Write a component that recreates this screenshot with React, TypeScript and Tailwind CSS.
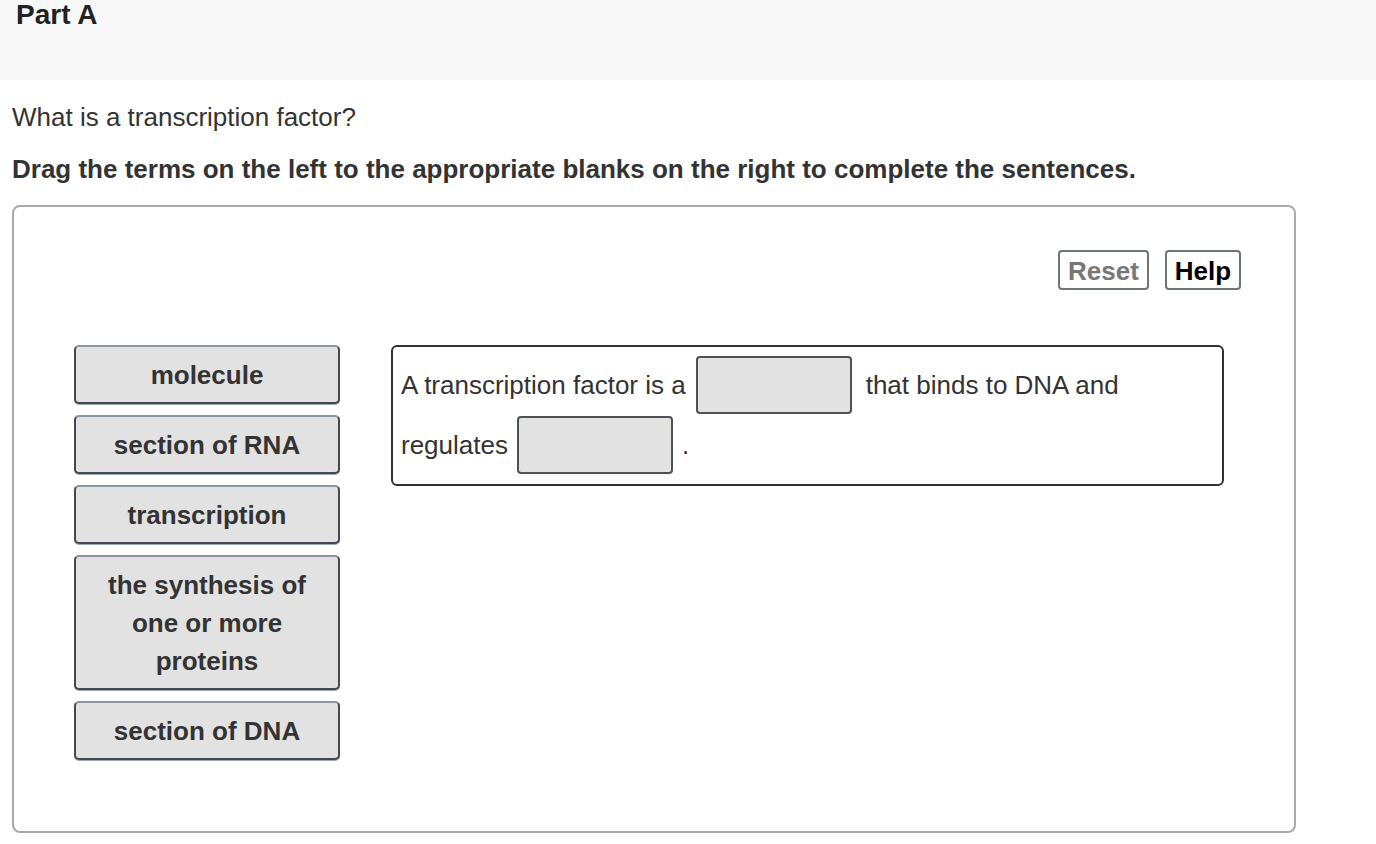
import React from 'react';

const terms = ['molecule', 'section of RNA', 'transcription', 'the synthesis of one or more proteins', 'section of DNA'];

function Blank() {
  return <div className="w-[156px] h-[58px] shrink-0 rounded-[4px] border-2 border-[#4d5257] bg-[#e2e2e2]" />;
}

export default function App() {
  return (
    <div className="min-h-screen bg-white text-[#333] font-['Liberation_Sans',Arial,sans-serif]">
      <div className="h-[80px] bg-[#f8f8f8] px-4">
        <h2 className="text-[28px] font-bold leading-[30px] text-[#222]">Part A</h2>
      </div>

      <div className="pl-3 w-[1296px]">
        <p className="mt-[22px] text-[26px] leading-[30px]">What is a transcription factor?</p>
        <p className="mt-[22px] text-[26px] leading-[30px] font-bold">
          Drag the terms on the left to the appropriate blanks on the right to complete the sentences.
        </p>

        <div className="mt-[21px] h-[628px] rounded-[8px] border-2 border-[#aaa] pt-[43px] pr-[53px] pl-[60px]">
          <div className="flex justify-end gap-4">
            <button className="h-[40px] w-[91px] rounded-[4px] border-2 border-[#6e7678] text-[26px] font-bold text-[#777]">
              Reset
            </button>
            <button className="h-[40px] w-[76px] rounded-[4px] border-2 border-[#6e7678] text-[26px] font-bold text-black">
              Help
            </button>
          </div>

          <div className="mt-[55px] flex items-start">
            <div className="flex w-[266px] flex-col gap-[11px]">
              {terms.map((t) => (
                <div
                  key={t}
                  className="rounded-[5px] border-2 border-[#45484f] border-t-[#8d95a3] bg-[#e2e2e2] px-6 pt-[9px] pb-[8px] text-center text-[26px] font-bold leading-[38px] shadow-[0_1px_0_#9aa]"
                >
                  {t}
                </div>
              ))}
            </div>

            <div className="ml-[51px] w-[833px] rounded-[6px] border-2 border-[#2f3336] px-2 pt-[9px] pb-[10px] text-[26px]">
              <div className="flex items-center h-[58px]">
                <span>A transcription factor is a</span>
                <span className="ml-[10px]"><Blank /></span>
                <span className="ml-[14px]">that binds to DNA and</span>
              </div>
              <div className="mt-[2px] flex items-center h-[58px]">
                <span>regulates</span>
                <span className="ml-[9px]"><Blank /></span>
                <span className="ml-[9px]">.</span>
              </div>
            </div>
          </div>
        </div>
      </div>
    </div>
  );
}
